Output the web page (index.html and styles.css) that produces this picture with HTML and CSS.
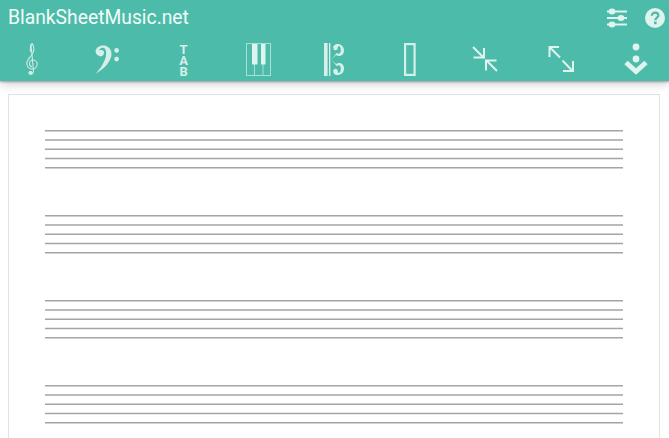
FILE: index.html
```html
<!DOCTYPE html>
<html lang="en">
<head>
<meta charset="utf-8">
<title>BlankSheetMusic.net</title>
<link rel="stylesheet" href="styles.css">
</head>
<body>
<header class="bar">
  <div class="top-row">
    <h1 class="brand">BlankSheetMusic.net</h1>
    <div class="top-actions">
      <svg width="20" height="20" viewBox="0 0 20 20"><g fill="none" stroke="#dff3ef" stroke-width="2"><path d="M0 3.500H20M0 10H20M0 16.500H20"/></g><g fill="#dff3ef"><ellipse cx="5" cy="3.500" rx="3.400" ry="3"/><ellipse cx="14" cy="10" rx="3.400" ry="3"/><ellipse cx="5" cy="16.500" rx="3.400" ry="3"/></g></svg>
      <svg width="20" height="20" viewBox="0 0 20 20"><circle cx="10" cy="10" r="10" fill="#dff3ef"/><path d="M6.800 7.800C6.800 5.800 8.200 4.600 10.100 4.600S13.400 5.800 13.400 7.500C13.400 9.700 10.300 9.800 10.300 12.300" fill="none" stroke="#4dbba9" stroke-width="2.200"/><rect x="9" y="13.600" width="2.600" height="2.600" fill="#4dbba9"/></svg>
    </div>
  </div>
  <nav class="tools">
    <div class="tool"><svg width="12" height="33" viewBox="0 0 12 33"><g fill="none" stroke="#cdece6" stroke-width="1.100"><path d="M5 1.500L7.500 28C7.500 31.500 3 32.500 3 29.500"/><path d="M6 0.500C8.500 3 8.500 8 6 11.500C3 15.500 0.800 17 0.800 20.500C0.800 24 3.500 26 6.200 26C9 26 11.200 24 11.200 21C11.200 18.500 9 17 7 17C4.500 17 3.500 19 3.500 20.500C3.500 22 4.500 23.500 6 23.800"/><path d="M6 0.500C4.500 2 4 5 4.500 9"/></g><circle cx="4.500" cy="29.700" r="1.900" fill="#cdece6"/></svg></div>
    <div class="tool"><svg width="26" height="29" viewBox="0 0 28 32"><path d="M0 32C7 28 15 21.500 17.500 13C19 7 16 1.500 10 0.500C5 0 0.500 2.500 0.300 7C0.300 10 3 12.500 5.800 12.500C8.500 12.500 10 10 9.500 7.500C9 5.500 6 5 4 6C5 3.500 7.500 2.500 10 3.500C12 4.800 12.500 9 11.500 13.500C9.500 20 5 27 0 32Z" fill="#d5f0ea"/><circle cx="23.500" cy="6" r="2.600" fill="#d5f0ea"/><circle cx="23.500" cy="15.500" r="2.600" fill="#d5f0ea"/></svg></div>
    <div class="tool"><span class="tab">TAB</span></div>
    <div class="tool"><svg width="26" height="33" viewBox="0 0 26 33"><g fill="none" stroke="#a9dfd4"><rect x="0.500" y="0.500" width="24" height="32"/><path d="M8.500 21V33M17 21V33"/></g><rect x="6" y="1" width="5.500" height="20.500" fill="#dff3ef"/><rect x="15" y="1" width="4.500" height="20.500" fill="#dff3ef"/></svg></div>
    <div class="tool"><svg width="22" height="33" viewBox="0 0 22 33"><rect x="1" y="0" width="3.600" height="33" fill="#d5f0ea"/><rect x="6" y="0" width="1.400" height="33" fill="#d5f0ea"/><path d="M8.500 16.500L13 12C17 14.500 21 12 21 7.500C21 3 17.500 0.500 13.500 1C11 1.500 10 3.500 10.500 5L14.500 5C15 3.500 15.500 3 16 3C17.500 3.500 17.800 5.500 17.800 7.500C17.800 10.500 16 11.500 13.500 10Z" fill="#d5f0ea"/><path d="M8.500 16.500L13 21C17 18.500 21 21 21 25.500C21 30 17.500 32.500 13.500 32C11 31.500 10 29.500 10.500 28L14.500 28C15 29.500 15.500 30 16 30C17.500 29.500 17.800 27.500 17.800 25.500C17.800 22.500 16 21.500 13.500 23Z" fill="#d5f0ea"/><circle cx="12.500" cy="5" r="2.200" fill="#d5f0ea"/><circle cx="12.500" cy="28" r="2.200" fill="#d5f0ea"/></svg></div>
    <div class="tool"><svg width="12" height="33" viewBox="0 0 12 33"><rect x="1.100" y="1.100" width="9.500" height="30.800" fill="none" stroke="#d5f0ea" stroke-width="2.200"/></svg></div>
    <div class="tool"><svg width="28" height="28" viewBox="0 0 28 28"><g fill="none" stroke="#dff3ef" stroke-width="2"><path d="M2 2L12.500 12.500M2.500 12.500H13V3"/><path d="M26 26L15.500 15.500M25.500 15.500H15V25.500"/></g></svg></div>
    <div class="tool"><svg width="28" height="28" viewBox="0 0 28 28"><g fill="none" stroke="#dff3ef" stroke-width="2"><path d="M2.500 2L13 12.500M12 2H2.500V12"/><path d="M25.500 26L15.500 15.500M16 26H26V16"/></g></svg></div>
    <div class="tool"><svg width="26" height="33" viewBox="0 0 26 33"><circle cx="13" cy="4" r="3.400" fill="#dff3ef"/><circle cx="13" cy="16" r="3.400" fill="#dff3ef"/><path d="M3 19.500L13 28.500L23 19.500" fill="none" stroke="#dff3ef" stroke-width="5"/></svg></div>
  </nav>
</header>
<main class="page">
  <section class="sheet">
    <svg class="staff" viewBox="0 0 578 40"><path d="M0 1.750H578M0 11H578M0 20.250H578M0 29.500H578M0 38.750H578"/></svg>
    <svg class="staff" viewBox="0 0 578 40"><path d="M0 1.750H578M0 11H578M0 20.250H578M0 29.500H578M0 38.750H578"/></svg>
    <svg class="staff" viewBox="0 0 578 40"><path d="M0 1.750H578M0 11H578M0 20.250H578M0 29.500H578M0 38.750H578"/></svg>
    <svg class="staff" viewBox="0 0 578 40"><path d="M0 1.750H578M0 11H578M0 20.250H578M0 29.500H578M0 38.750H578"/></svg>
  </section>
</main>
</body>
</html>
```
FILE: styles.css
```css
html, body {
  margin: 0;
  height: 100%;
  overflow: hidden;
  background: #fff;
}
body {
  font-family: Roboto, "Liberation Sans", sans-serif;
  display: flex;
  flex-direction: column;
}
.bar {
  flex: none;
  height: 81px;
  background: #4dbba9;
  box-shadow: 0 1px 2px rgba(0, 0, 0, 0.3), 0 3px 9px rgba(0, 0, 0, 0.2);
  display: flex;
  flex-direction: column;
  position: relative;
}
.top-row {
  height: 36px;
  display: flex;
  align-items: center;
  justify-content: space-between;
  padding: 0 4px 0 8px;
}
.brand {
  margin: 0 0 1px;
  font-size: 19.300px;
  font-weight: 400;
  color: #f2fbf9;
}
.top-actions {
  display: flex;
  align-items: center;
  gap: 18px;
}
.top-actions svg,
.tool svg {
  display: block;
  filter: blur(0.3px);
}
.tools {
  display: flex;
  justify-content: space-between;
  padding: 6px 19px 0 18px;
}
.tool {
  width: 28px;
  height: 34px;
  display: flex;
  align-items: center;
  justify-content: center;
}
.tab {
  writing-mode: vertical-rl;
  text-orientation: upright;
  font-size: 13px;
  font-weight: 700;
  letter-spacing: -3.800px;
  line-height: 14px;
  color: #d5f0ea;
}
.page {
  flex: 1;
  display: flex;
  padding: 13px 9px 0 8px;
}
.sheet {
  flex: 1;
  border: 1px solid #e2e2e2;
  border-bottom: 0;
  padding: 34px 36px 0;
  display: flex;
  flex-direction: column;
  gap: 45px;
  overflow: hidden;
}
.staff {
  display: block;
  width: 578px;
  height: 40px;
  flex: none;
}
.staff path {
  fill: none;
  stroke: #a4a4a4;
  stroke-width: 1.6;
}
```
